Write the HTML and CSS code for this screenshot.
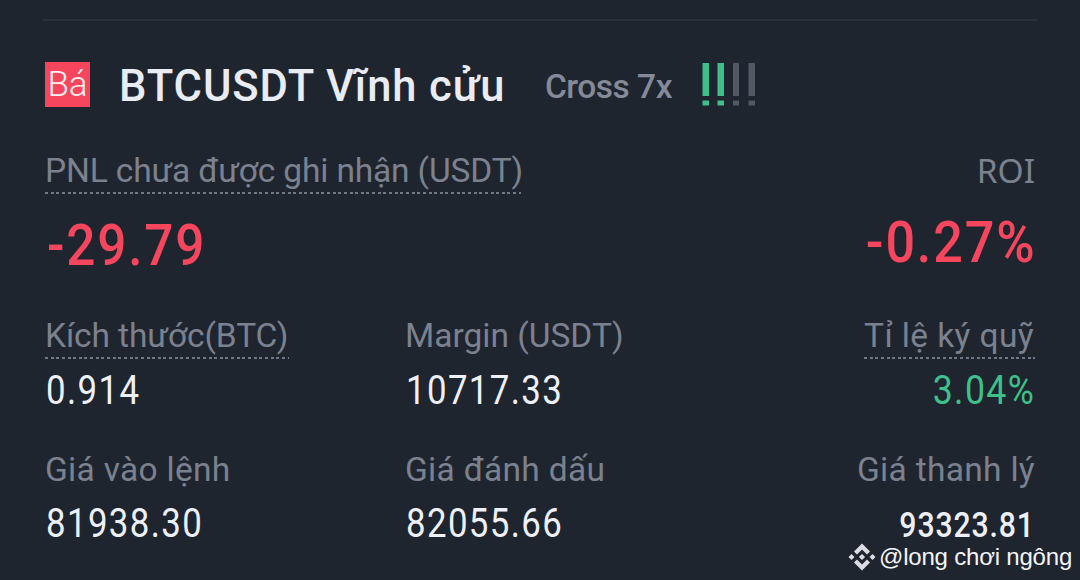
FILE: index.html
```html
<!DOCTYPE html>
<html lang="vi">
<head>
<meta charset="utf-8">
<title>BTCUSDT</title>
<link rel="stylesheet" href="styles.css">
</head>
<body>
<main class="card">
  <hr class="rule">
  <header class="head">
    <span class="side">Bá</span>
    <h1 class="pair">BTCUSDT Vĩnh cửu</h1>
    <span class="mode">Cross 7x</span>
    <svg class="risk" width="56" height="44" viewBox="0 0 56 44">
      <g fill="#3fc08a"><path d="M1.500 0h6.500v33H1.500zM1.500 37.500h6.500v5H1.500zM16.500 0h6.500v33h-6.500zM16.500 37.500h6.500v5h-6.500z"/></g>
      <g fill="#535864"><path d="M32 0h6v33h-6zM32 37.500h6v5h-6zM47.500 0h6.500v33h-6.500zM47.500 37.500h6.500v5h-6.500z"/></g>
    </svg>
  </header>
  <section class="summary">
    <div class="cell">
      <span class="label dotted l-pnl">PNL chưa được ghi nhận (USDT)</span>
      <span class="big v-pnl">-29.79</span>
    </div>
    <div class="cell right">
      <span class="label l-roi">ROI</span>
      <span class="big v-roi">-0.27%</span>
    </div>
  </section>
  <section class="stats">
    <div class="cell"><span class="label dotted l-size">Kích thước(BTC)</span><span class="value">0.914</span></div>
    <div class="cell"><span class="label l-margin">Margin (USDT)</span><span class="value">10717.33</span></div>
    <div class="cell right"><span class="label dotted l-ratio">Tỉ lệ ký quỹ</span><span class="value green v-ratio">3.04%</span></div>
  </section>
  <section class="stats prices">
    <div class="cell"><span class="label l-entry">Giá vào lệnh</span><span class="value">81938.30</span></div>
    <div class="cell"><span class="label l-mark">Giá đánh dấu</span><span class="value">82055.66</span></div>
    <div class="cell right"><span class="label l-liq">Giá thanh lý</span><span class="value small">93323.81</span></div>
  </section>
  <div class="watermark">
    <svg width="28" height="28" viewBox="0 0 28 28" fill="#dcdde0"><path d="M14 0.500l8 8-3 3-5-5-5 5-3-3zM14 27.500l8-8-3-3-5 5-5-5-3 3zM0.500 14l3-3 3 3-3 3zM21.500 14l3-3 3 3-3 3zM14 10.900l3.100 3.100-3.100 3.100-3.100-3.100z"/></svg>
    <span class="handle">@long chơi ngông</span>
  </div>
</main>
</body>
</html>
```
FILE: styles.css
```css
* { box-sizing: border-box; }
body { margin: 0; background: #1f252f; font-family: Roboto, "Noto Sans", sans-serif; }
.card { position: relative; width: 1080px; height: 580px; padding: 19px 45px 0; overflow: hidden; background: #1f252f; }
.rule { height: 2px; margin: 0 -2px; border: 0; background: #2a303c; }
.head { display: flex; align-items: flex-start; height: 128px; padding-top: 41px; white-space: nowrap; }
.side { display: flex; justify-content: center; width: 45px; height: 45px; background: #f6465d; color: #fdf0f3; font-size: 35px; line-height: 45px; font-weight: 300; }
.pair { width: 385px; margin: 1px 0 0 29px; font-size: 43.500px; line-height: 48px; font-weight: 500; letter-spacing: 0.900px; color: #eaecf4; }
.mode { width: 127px; margin-left: 41px; font-size: 33.500px; line-height: 49px; font-weight: 500; letter-spacing: -0.500px; color: #848a98; }
.risk { margin: 1px 0 0 29px; }
.summary { display: flex; justify-content: space-between; height: 165px; }
.cell { display: flex; flex-direction: column; align-items: flex-start; white-space: nowrap; }
.right { align-items: flex-end; }
.label { height: 45px; font-size: 33.500px; line-height: 43px; font-weight: 400; color: #7b818e; }
.dotted { background: repeating-linear-gradient(90deg, #707683 0 3px, transparent 3px 5.640px) 0 100% / 100% 2px no-repeat; }
.big { font-size: 57px; line-height: 60px; margin-top: 22px; font-weight: 500; letter-spacing: 2px; color: #f6465d; transform: scaleX(0.900); transform-origin: left; }
.v-pnl { margin-left: 2px; }
.right .v-roi { margin-top: 19px; margin-right: -1px; transform: scaleX(0.915); }
.stats { display: grid; grid-template-columns: 360px 1fr auto; height: 134px; }
.value { font-size: 40px; line-height: 44px; margin: 10px 0 0 1px; letter-spacing: 1.600px; color: #eef0f7; transform: scaleX(0.870); transform-origin: left; }
.prices .value { margin-top: 9px; }
.right .big, .right .value { transform-origin: right; }
.small { font-size: 34.500px; font-weight: 500; line-height: 46px; letter-spacing: 1px; transform: scaleX(0.875); }
.right .v-ratio { transform: scaleX(0.890); }
.green { color: #3fc08a; }
.l-pnl { width: 476px; letter-spacing: -0.150px; }
.l-size { width: 244px; letter-spacing: -0.100px; }
.l-ratio { width: 171px; letter-spacing: 0.400px; }
.l-entry, .l-mark, .l-liq { letter-spacing: 0.300px; }
.l-roi { font-family: "Noto Sans", sans-serif; font-weight: 400; }
.watermark { position: absolute; left: 848px; top: 543px; display: flex; align-items: center; gap: 3px; height: 28px; white-space: nowrap; font-family: "Liberation Sans", Arial, sans-serif; font-size: 24px; letter-spacing: -0.200px; color: #f4f4f6; }
```
